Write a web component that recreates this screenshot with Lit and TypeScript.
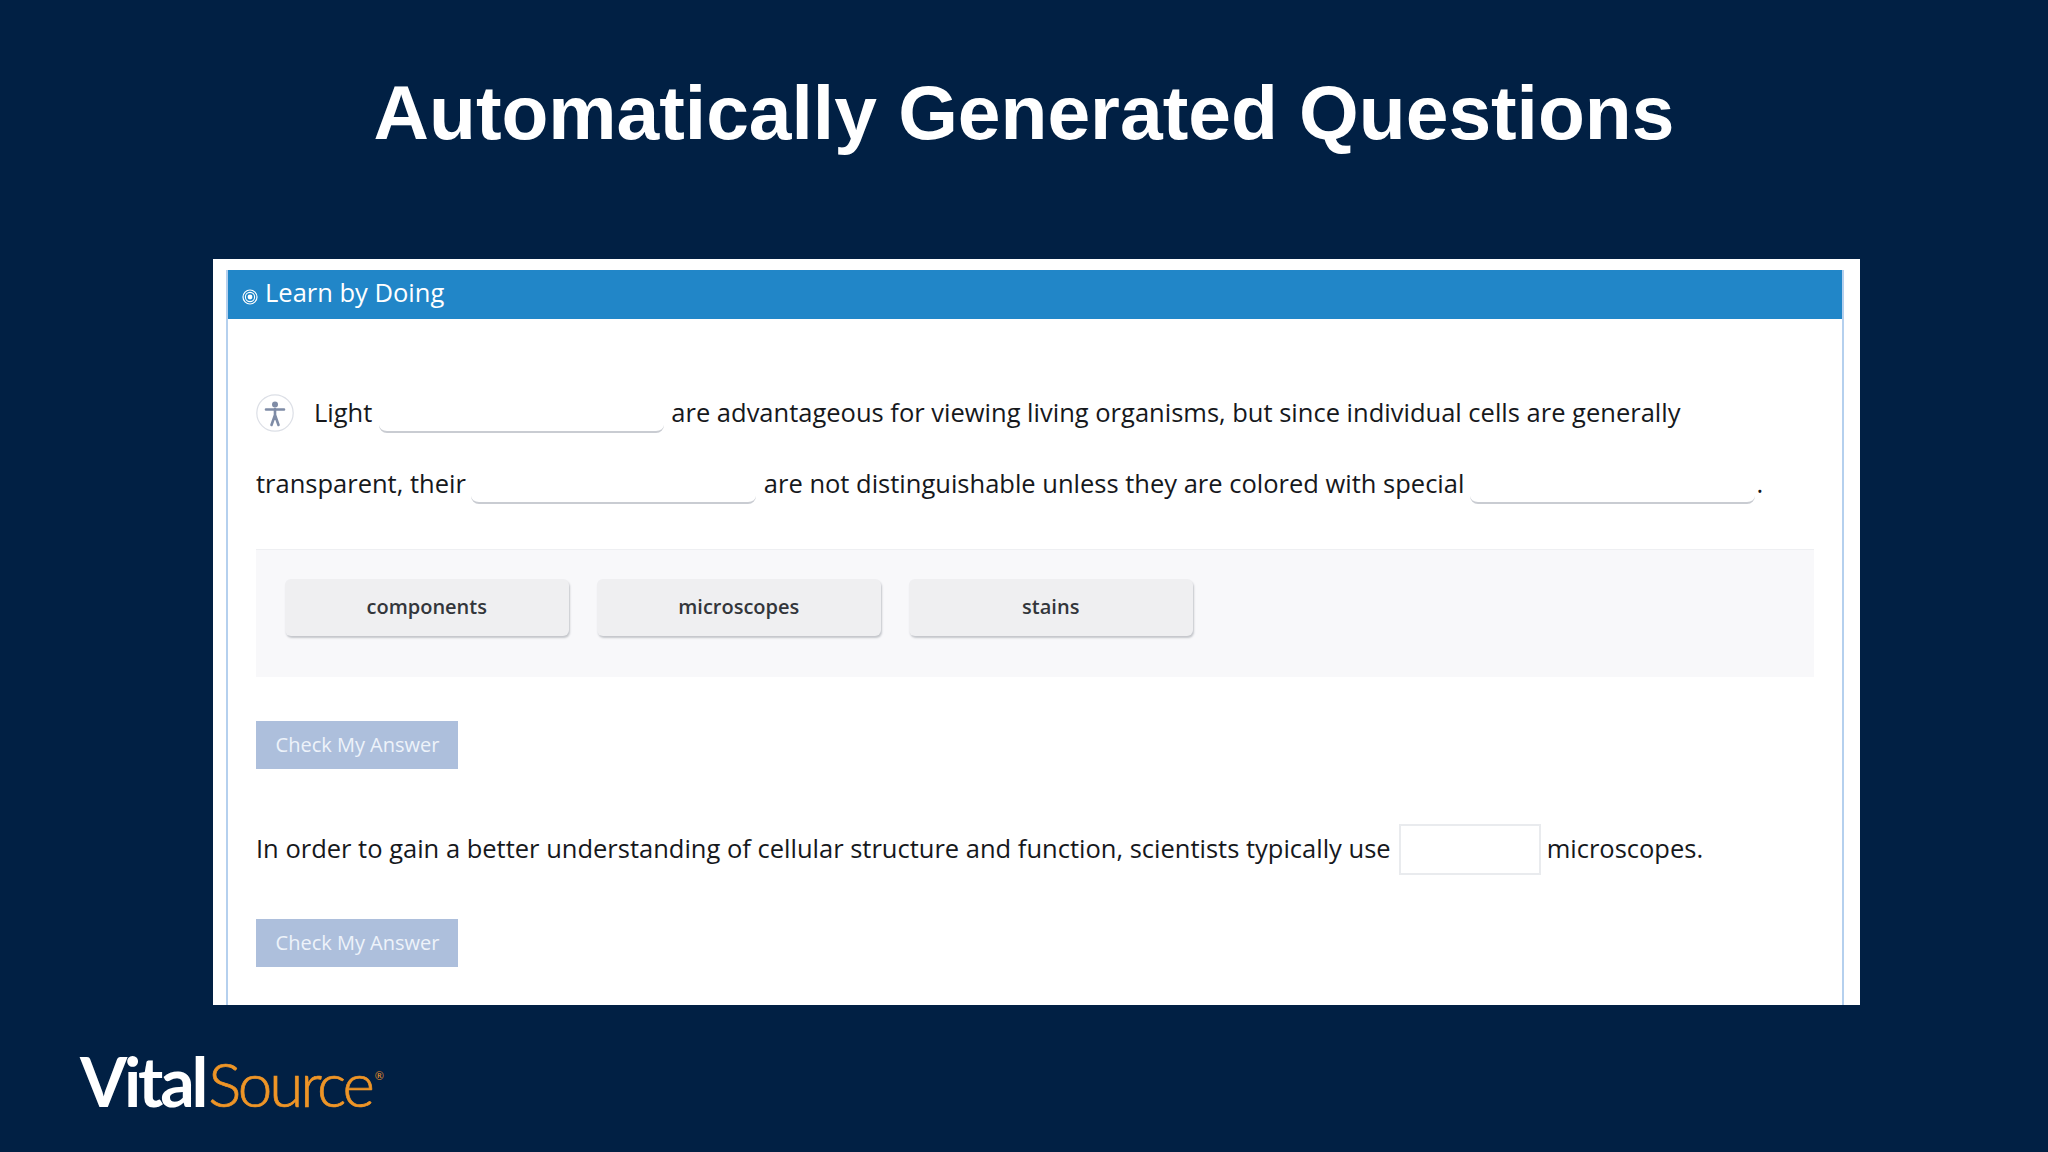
import { LitElement, html, css } from "lit";
import { customElement } from "lit/decorators.js";

@customElement("app-root")
export class AppRoot extends LitElement {
  static styles = css`
    :host { display: block; }
    .page { box-sizing: border-box; width: 2048px; height: 1152px; background: #012044; display: flex; flex-direction: column; overflow: hidden; }
    h1 { margin: 0; padding-top: 68px; height: 259px; box-sizing: border-box; text-align: center; font: 700 76.75px/90px "Liberation Sans", Arial, sans-serif; color: #fff; }
    .card { box-sizing: border-box; margin-left: 213px; width: 1647px; height: 746px; background: #fff; padding: 11px 16px 0 13px; overflow: hidden; flex: none; }
    .panel { box-sizing: border-box; height: 100%; border-left: 2px solid #b5d0ee; border-right: 2px solid #b5d0ee; font-family: "Open Sans", sans-serif; color: #16181c; }
    .head { height: 49px; background: #2186c8; color: #fff; display: flex; align-items: center; gap: 7px; padding-left: 14px; font-size: 25.5px; }
    .head svg { margin-top: 5px; }
    .head span { margin-top: -5px; }
    .body { padding: 0 28.5px 0 28px; }
    p { margin: 0; font-size: 25.5px; white-space: nowrap; }
    .para { line-height: 71px; padding-top: 58px; padding-bottom: 30px; }
    .icon { display: inline-block; vertical-align: middle; margin-right: 20px; margin-top: -4px; }
    .blank { display: inline-block; box-sizing: border-box; width: 285px; height: 30px; vertical-align: -11px; margin: 0 8px 0 5px; border-bottom: 2px solid #c9ccd2; border-radius: 0 0 8px 8px; }
    .blank.one { margin: 0 7px; }
    .blank.last { margin: 0 1px 0 6px; }
    .bank { height: 128px; box-sizing: border-box; background: #f8f8fa; border-top: 1px solid #eeeff2; padding: 29px 28.5px; display: flex; gap: 27.5px; }
    .chip { width: 284.5px; height: 57px; box-sizing: border-box; padding-bottom: 2px; background: #efeff1; border-radius: 6px; box-shadow: 1px 2px 2px #c4c6cb; display: flex; align-items: center; justify-content: center; font-size: 20px; font-weight: 600; color: #33363b; }
    .check { width: 202px; height: 48px; box-sizing: border-box; padding: 0 0 2px 1px; background: #adbfdc; color: #eef3fa; display: flex; align-items: center; justify-content: center; font-size: 20px; }
    .first { margin-top: 44px; }
    .second { margin-top: 44px; }
    .sentence { margin-top: 55px; display: flex; align-items: center; height: 51px; }
    .sentence span:not(.input) { margin-top: -3px; }
    .input { width: 142px; height: 51px; box-sizing: border-box; margin: 0 6px 0 8px; border: 2px solid #e9ebee; }
    .footer { display: flex; align-items: baseline; padding: 38px 0 0 80px; font: 300 62px/76px Lato, sans-serif; letter-spacing: -3.2px; color: #ee9527; }
    .vital { color: #fff; font-weight: 700; font-size: 68px; letter-spacing: -3.2px; margin-right: 3px; }
    .source { -webkit-text-stroke: 0.7px #ee9527; }
    sup { align-self: flex-start; font-size: 11px; font-weight: 400; letter-spacing: 0; line-height: 1; margin: 27px 0 0 3px; }
  `;

  render() {
    return html`
      <div class="page">
        <h1>Automatically Generated Questions</h1>
        <section class="card">
          <div class="panel">
            <div class="head">
              <svg width="16" height="16" viewBox="0 0 16 16" fill="none" stroke="#fff">
                <circle cx="8" cy="8" r="7" stroke-width="1.2" />
                <circle cx="8" cy="8" r="4.6" stroke-width="1.1" />
                <circle cx="8" cy="8" r="2.4" fill="#fff" stroke="none" />
              </svg>
              <span>Learn by Doing</span>
            </div>
            <div class="body">
              <p class="para">
                <svg class="icon" width="38" height="38" viewBox="0 0 38 38">
                  <circle cx="19" cy="19" r="18.2" fill="#fff" stroke="#dcdfe6" stroke-width="1.2" />
                  <circle cx="19" cy="10.5" r="3" fill="#7f8ca6" />
                  <path d="M10 15.5 L28 15.5 M19 15 L19 22 M19 21 L15.5 31 M19 21 L22.5 31" stroke="#7f8ca6" stroke-width="2.6" fill="none" stroke-linecap="round" />
                </svg>Light<span class="blank one"></span>are advantageous for viewing living organisms, but since individual cells are generally<br />
                transparent, their<span class="blank"></span>are not distinguishable unless they are colored with special<span class="blank last"></span>.
              </p>
              <div class="bank">
                <div class="chip">components</div>
                <div class="chip">microscopes</div>
                <div class="chip">stains</div>
              </div>
              <div class="check first">Check My Answer</div>
              <p class="sentence">
                <span>In order to gain a better understanding of cellular structure and function, scientists typically use</span>
                <span class="input"></span>
                <span>microscopes.</span>
              </p>
              <div class="check second">Check My Answer</div>
            </div>
          </div>
        </section>
        <footer class="footer"><span class="vital">Vital</span><span class="source">Source</span><sup>®</sup></footer>
      </div>
    `;
  }
}
